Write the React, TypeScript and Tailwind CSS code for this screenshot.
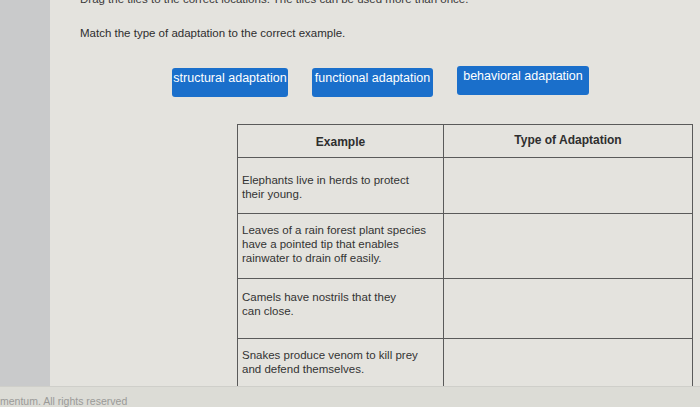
import React from 'react';

const tiles = [
  { label: 'structural adaptation', cls: 'mt-[28px] ml-[172px] w-[116px]' },
  { label: 'functional adaptation', cls: 'mt-[28px] ml-[24px] w-[121px]' },
  { label: 'behavioral adaptation', cls: 'mt-[26px] ml-[24px] w-[132px]' },
];

const rows = [
  { lines: ['Elephants live in herds to protect', 'their young.'], h: 'h-[56px]', pt: 'pt-[15px]' },
  { lines: ['Leaves of a rain forest plant species', 'have a pointed tip that enables', 'rainwater to drain off easily.'], h: 'h-[65px]', pt: 'pt-[9px]' },
  { lines: ['Camels have nostrils that they', 'can close.'], h: 'h-[60px]', pt: 'pt-[11px]' },
  { lines: ['Snakes produce venom to kill prey', 'and defend themselves.'], h: 'h-[50px]', pt: 'pt-[9px]' },
];

export default function App() {
  return (
    <div className="relative w-[700px] h-[407px] overflow-hidden bg-[#e4e3de] font-['Liberation_Sans',Arial,sans-serif] text-[#2e2e2e]">
      <div className="flex h-[386px] overflow-hidden">
        {/* left gutter */}
        <div className="w-[50px] shrink-0 bg-[#c9cacb]" />

        <div className="flex-1 pl-[30px]">
          <p className="mt-[-8px] text-[11.5px] leading-[14px] text-[#3a3a3a]">
            Drag the tiles to the correct locations. The tiles can be used more than once.
          </p>
          <p className="mt-[20px] text-[11.5px] leading-[14px]">Match the type of adaptation to the correct example.</p>

          {/* tiles */}
          <div className="flex items-start -ml-[80px]">
            {tiles.map((t) => (
              <div
                key={t.label}
                className={`${t.cls} h-[29px] shrink-0 rounded-[3px] bg-[#1a6fcb] pt-[3px] text-center text-[12.5px] leading-[15px] text-white`}
              >
                {t.label}
              </div>
            ))}
          </div>

          {/* table */}
          <div className="mt-[27px] ml-[157px] w-[456px] border-t border-l border-r border-[#5a5a5a]">
            <div className="flex h-[33px] border-b border-[#5a5a5a]">
              <div className="w-[206px] border-r border-[#5a5a5a] pt-[10px] text-center text-[12px] font-bold leading-[14px]">
                Example
              </div>
              <div className="flex-1 pt-[8px] text-center text-[12px] font-bold leading-[14px]">Type of Adaptation</div>
            </div>
            {rows.map((r, i) => (
              <div key={i} className={`flex ${r.h} ${i < rows.length - 1 ? 'border-b border-[#5a5a5a]' : ''}`}>
                <div className={`w-[206px] border-r border-[#5a5a5a] pl-[4px] ${r.pt} text-[11.5px] leading-[14px] text-[#333]`}>
                  {r.lines.map((l) => (
                    <div key={l}>{l}</div>
                  ))}
                </div>
                <div className="flex-1" />
              </div>
            ))}
          </div>
        </div>
      </div>

      {/* footer */}
      <div className="h-[21px] border-t border-[#cfcfca] bg-[#dcdcd6] pt-[8px] text-[10.5px] leading-[12px] text-[#9a9a98]">
        mentum. All rights reserved
      </div>
    </div>
  );
}
